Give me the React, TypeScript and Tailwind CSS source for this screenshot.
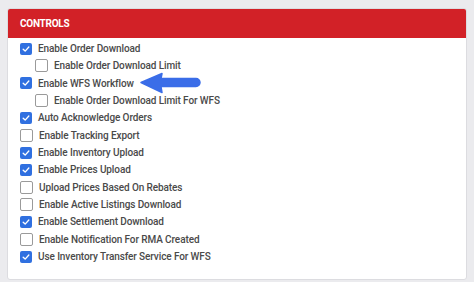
const rows: { label: string; checked: boolean; indent?: boolean }[] = [
  { label: "Enable Order Download", checked: true },
  { label: "Enable Order Download Limit", checked: false, indent: true },
  { label: "Enable WFS Workflow", checked: true },
  { label: "Enable Order Download Limit For WFS", checked: false, indent: true },
  { label: "Auto Acknowledge Orders", checked: true },
  { label: "Enable Tracking Export", checked: false },
  { label: "Enable Inventory Upload", checked: true },
  { label: "Enable Prices Upload", checked: true },
  { label: "Upload Prices Based On Rebates", checked: false },
  { label: "Enable Active Listings Download", checked: false },
  { label: "Enable Settlement Download", checked: true },
  { label: "Enable Notification For RMA Created", checked: false },
  { label: "Use Inventory Transfer Service For WFS", checked: true },
];

function Box({ checked }: { checked: boolean }) {
  if (checked) {
    return (
      <span className="flex size-[12px] shrink-0 items-center justify-center rounded-[2px] bg-[#3070e0]">
        <svg viewBox="0 0 12 12" className="size-[10px]" fill="none" stroke="#fff" strokeWidth="1.6" strokeLinecap="round" strokeLinejoin="round">
          <path d="M2.6 6.2 L5 8.5 L9.4 3.6" />
        </svg>
      </span>
    );
  }
  return <span className="size-[13px] shrink-0 rounded-[2px] border border-[#9a9a9a] bg-white" />;
}

function Arrow() {
  return (
    <svg viewBox="0 0 62 24" className="absolute left-[139px] top-[71px] h-[24px] w-[62px]">
      <path d="M2 11.5 L23 2.5 L22 7.5 L57 7.5 A4 4 0 0 1 57 15.5 L22 15.5 L23 21.5 Z" fill="#3a6de8" stroke="#3a6de8" strokeWidth="1.5" strokeLinejoin="round" />
    </svg>
  );
}

export default function App() {
  return (
    <div className="relative h-[282px] w-[474px] bg-[#ebebee] px-[7px] pt-[8px] font-['Roboto',sans-serif]">
      <div className="overflow-hidden rounded-[3px] border border-[#dcdce0] bg-white pb-[14px]">
        <div className="flex h-[29px] items-center bg-[#d22127] px-[12px] text-[10px] font-bold tracking-tight text-white">
          CONTROLS
        </div>
        <ul className="pt-[2px]">
          {rows.map((r) => (
            <li
              key={r.label}
              className={`flex h-[17.33px] items-center gap-[6px] text-[10px] font-medium tracking-[-0.1px] text-[#4a4a4a] ${r.indent ? "pl-[27px]" : "pl-[12px]"}`}
            >
              <Box checked={r.checked} />
              <span>{r.label}</span>
            </li>
          ))}
        </ul>
      </div>
      <Arrow />
    </div>
  );
}
